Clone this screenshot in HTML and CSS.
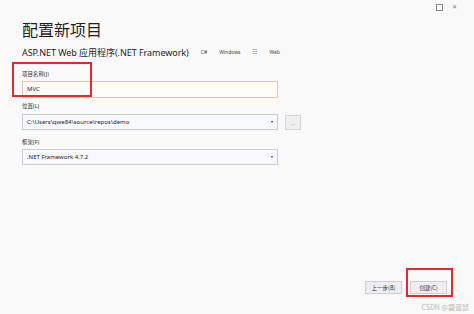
FILE: index.html
```html
<!DOCTYPE html>
<html lang="zh-CN">
    <head>
        <title>配置新项目</title>
        <link rel="stylesheet" href="styles.css">
    </head>
    <body>
        <div class="window">
            <div class="titlebar">
                <span class="win-btn max"></span>
                <span class="win-btn close">&#x2715;</span>
            </div>

            <div class="content">
                <h1 class="title">配置新项目</h1>
                <div class="subtitle">
                    <span class="template">ASP.NET Web 应用程序(.NET Framework)</span>
                    <span class="tag">C#</span>
                    <span class="tag">Windows</span>
                    <span class="tag icon">&#x2637;</span>
                    <span class="tag">Web</span>
                </div>

                <div class="field first">
                    <label class="label">项目名称(J)</label>
                    <div class="input name">MVC</div>
                    <span class="mark mark-name"></span>
                </div>

                <div class="field">
                    <label class="label">位置(L)</label>
                    <div class="row">
                        <div class="input combo">C:\Users\qwe84\source\repos\demo<span class="arrow"></span></div>
                        <button class="browse">...</button>
                    </div>
                </div>

                <div class="field last">
                    <label class="label">框架(F)</label>
                    <div class="input combo">.NET Framework 4.7.2<span class="arrow"></span></div>
                </div>
            </div>

            <div class="footer">
                <button class="btn">上一步(B)</button>
                <button class="btn create">创建(C)<span class="mark mark-create"></span></button>
            </div>
            <div class="watermark">CSDN @碧蓝鼠</div>
        </div>
    </body>
</html>
```

FILE: styles.css
```css
body
{
    margin: 0;
    background-color: #f9f9f9;
    font-family: "Noto Sans", "Noto Sans CJK SC", sans-serif;
    color: #1e1e1e;
    overflow: hidden;
}

.window
{
    height: 314px;
    display: flex;
    flex-direction: column;
    position: relative;
}

.titlebar
{
    display: flex;
    justify-content: flex-end;
    align-items: center;
    gap: 9px;
    height: 14px;
    padding-right: 17px;
}

.win-btn
{
    color: #777;
}

.max
{
    width: 5px;
    height: 5px;
    border: 1px solid #888;
}

.close
{
    font-size: 6px;
}

.content
{
    padding-left: 22px;
}

.title
{
    margin: 3px 0 0 0;
    font-size: 16px;
    font-weight: 400;
    line-height: 24px;
    font-family: "Noto Sans CJK SC", sans-serif;
}

.subtitle
{
    display: flex;
    align-items: center;
    margin-top: 4px;
    height: 14px;
}

.template
{
    font-size: 9px;
    margin-right: 12px;
    letter-spacing: -0.05px;
}

.tag
{
    font-size: 5px;
    color: #444;
    margin-right: 12px;
}

.tag.icon
{
    font-size: 6px;
    color: #666;
}

.field
{
    position: relative;
    margin-top: 4px;
}

.field.first
{
    margin-top: 11px;
}

.field.last
{
    margin-top: 8px;
}

.label
{
    display: block;
    font-size: 5.5px;
    line-height: 9px;
    color: #333;
    margin-bottom: 2px;
}

.input
{
    width: 250px;
    height: 14px;
    border: 1px solid #cfcfcf;
    background-color: #fff;
    font-size: 6px;
    line-height: 14px;
    padding-left: 4px;
    color: #222;
    position: relative;
}

.input.name
{
    height: 15px;
    line-height: 15px;
    border-color: #e6c9a3;
    background-color: #fffdfa;
}

.combo
{
    background-color: #f7f9ff;
    border-color: #c9ccd6;
}

.arrow
{
    position: absolute;
    right: 4px;
    top: 6px;
    border-left: 1.5px solid transparent;
    border-right: 1.5px solid transparent;
    border-top: 2px solid #333;
}

.row
{
    display: flex;
    align-items: center;
    gap: 7px;
}

.browse
{
    width: 16px;
    height: 15px;
    margin-top: 2px;
    border: 1px solid #d6d6d6;
    background-color: #efefef;
    color: #666;
    font-size: 5px;
    padding: 0;
}

.mark
{
    position: absolute;
    border: 2px solid #e8262b;
}

.mark-name
{
    left: -10px;
    top: -8px;
    width: 76px;
    height: 31px;
}

.footer
{
    margin-top: auto;
    margin-bottom: 20px;
    display: flex;
    justify-content: flex-end;
    gap: 8px;
    padding-right: 27px;
}

.btn
{
    position: relative;
    width: 37px;
    height: 13px;
    padding: 0;
    border: 1px solid #cfcfcf;
    background-color: #eceef2;
    font-family: "Noto Sans CJK SC", sans-serif;
    font-size: 5.5px;
    color: #333;
}

.mark-create
{
    left: -5px;
    top: -14px;
    width: 43px;
    height: 25px;
}

.watermark
{
    position: absolute;
    right: 5px;
    bottom: 2px;
    font-size: 7px;
    color: #b8b8b8;
    font-family: "Noto Sans CJK SC", sans-serif;
}
```
